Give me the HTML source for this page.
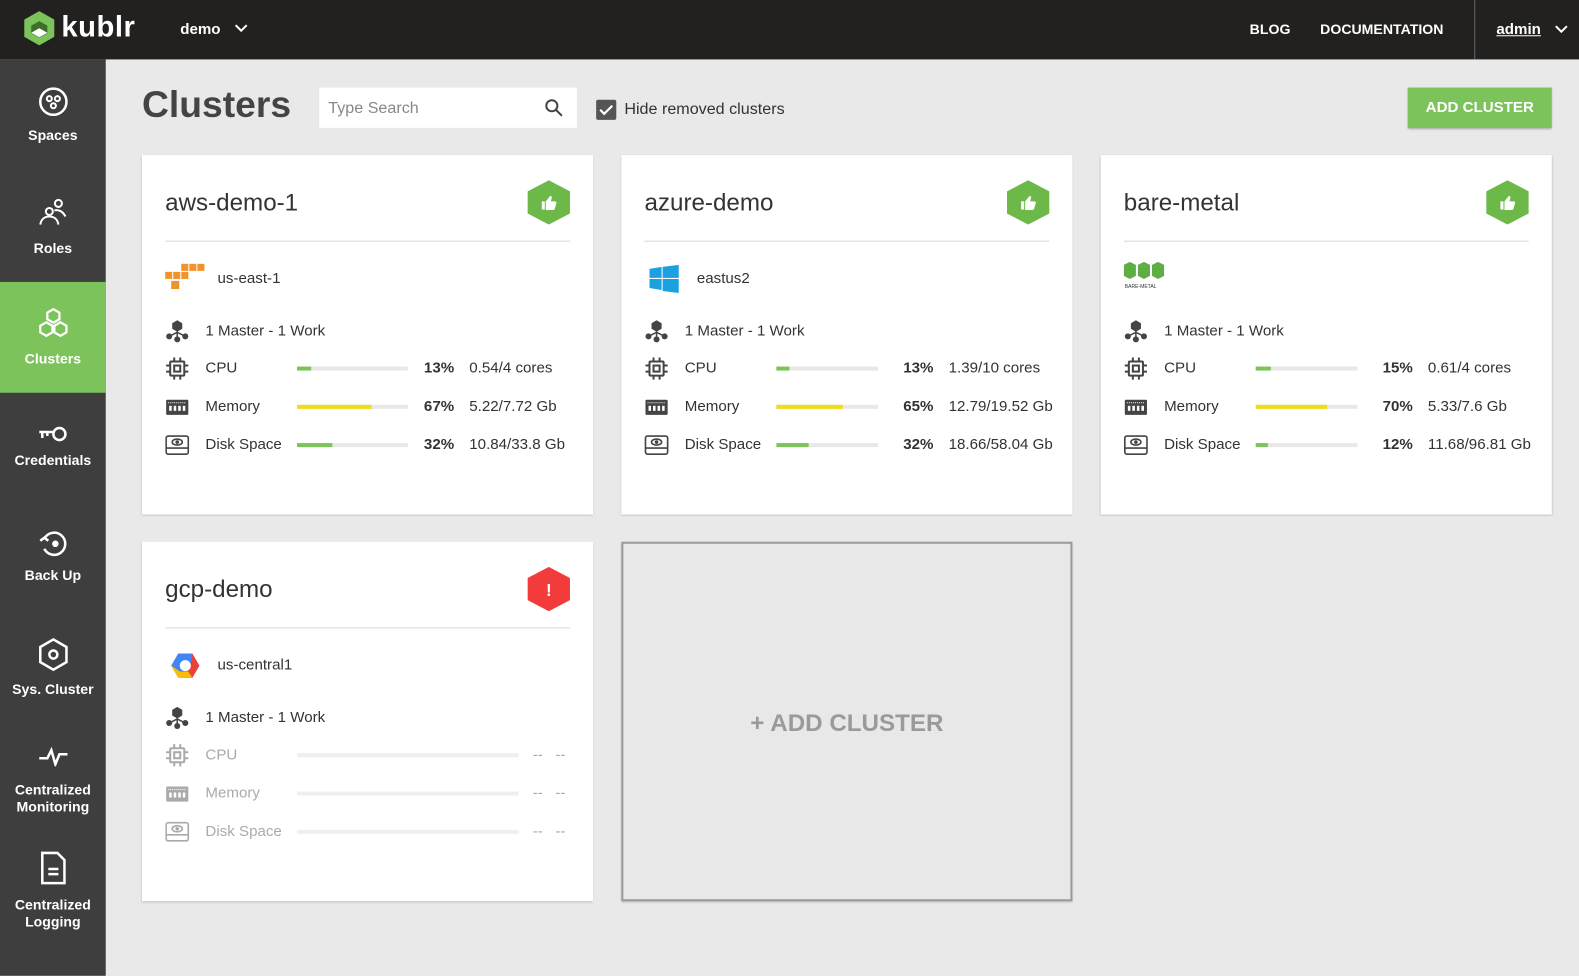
<!DOCTYPE html>
<html><head><meta charset="utf-8"><style>
*{box-sizing:border-box;margin:0;padding:0}
body{width:1579px;height:959px;overflow:hidden;background:#e9e9e9;font-family:"Liberation Sans",sans-serif;position:relative;color:#333}
#w{position:absolute;left:0;top:0;width:1568px;height:952px;transform:scale(1.007);transform-origin:0 0}
.top{position:absolute;left:0;top:0;width:1579px;height:59px;background:#222120;color:#fff}
.side{position:absolute;left:0;top:59px;width:105px;height:910px;background:#3e3e3e}
.nav{position:absolute;left:0;width:105px;text-align:center;color:#fff;font-weight:bold;font-size:14px;line-height:17px}
.nav svg{display:block;margin:0 auto}
.card{position:absolute;width:448px;height:357px;background:#fff;box-shadow:0 1px 2px rgba(0,0,0,.25)}
.card .t{position:absolute;left:23px;top:34px;font-size:24px;color:#333}
.card .hx{position:absolute;left:382px;top:25px}
.card .dv{position:absolute;left:23px;top:85px;width:402px;height:1px;background:#d8d8d8}
.r{position:absolute;left:23px;font-size:15px;color:#333;height:20px;line-height:20px;width:410px}
.r svg{position:absolute;left:0;top:-2px}
.r .l{position:absolute;left:40px}
.r .b{position:absolute;left:131px;top:8px;width:110px;height:4px;background:#e8e8e8}
.r .b i{display:block;height:4px}
.r .p{position:absolute;right:123px;font-weight:bold}
.r .v{position:absolute;left:302px}
.g .r{color:#aaa}
</style></head><body><div id="w">
<div class="top">
 <svg style="position:absolute;left:24px;top:11px" width="30" height="34" viewBox="0 0 30 34"><polygon points="15,0 30,8.5 30,25.5 15,34 0,25.5 0,8.5" fill="#7dc35b"/><polygon points="15,10 23,14.5 23,22 15,26.5 7,22 7,14.5" fill="#3d6e2a"/><polygon points="15,17 23,21.5 15,26 7,21.5" fill="#fff"/></svg>
 <div style="position:absolute;left:61px;top:11px;font-size:29px;font-weight:bold;letter-spacing:0.5px">kublr</div>
 <div style="position:absolute;left:179px;top:21px;font-size:15px;font-weight:bold">demo</div>
 <svg style="position:absolute;left:233px;top:24px" width="13" height="9"><path d="M1 1l5.5 5.5L12 1" stroke="#fff" stroke-width="2" fill="none"/></svg>
 <div style="position:absolute;left:1241px;top:21px;font-size:14px;font-weight:bold">BLOG</div>
 <div style="position:absolute;left:1311px;top:21px;font-size:14px;font-weight:bold">DOCUMENTATION</div>
 <div style="position:absolute;left:1464px;top:0;width:1px;height:59px;background:#666"></div>
 <div style="position:absolute;left:1486px;top:21px;font-size:15px;font-weight:bold;text-decoration:underline">admin</div>
 <svg style="position:absolute;left:1544px;top:25px" width="13" height="9"><path d="M1 1l5.5 5.5L12 1" stroke="#fff" stroke-width="2" fill="none"/></svg>
</div>
<div class="side">
 <div class="nav" style="top:26px"><svg width="32" height="32" viewBox="0 0 32 32"><circle cx="16" cy="16" r="13" stroke="#fff" stroke-width="2.5" fill="none"/><circle cx="12" cy="13" r="2.5" stroke="#fff" stroke-width="2" fill="none"/><circle cx="20" cy="13" r="2.5" stroke="#fff" stroke-width="2" fill="none"/><circle cx="16" cy="20" r="2.5" stroke="#fff" stroke-width="2" fill="none"/></svg><div style="margin-top:9px">Spaces</div></div>
 <div class="nav" style="top:136px"><svg width="32" height="32" viewBox="0 0 32 32"><circle cx="12" cy="15" r="3.5" stroke="#fff" stroke-width="2" fill="none"/><circle cx="21" cy="7" r="3.5" stroke="#fff" stroke-width="2" fill="none"/><path d="M3 28c1-6 5-8 9-8s8 2 9 8M17 14c3-1 8 0 11 6" stroke="#fff" stroke-width="2" fill="none"/></svg><div style="margin-top:11px">Roles</div></div>
 <div style="position:absolute;left:0;top:221px;width:105px;height:110px;background:#7dc35b"></div>
 <div class="nav" style="top:246px"><svg width="32" height="32" viewBox="0 0 32 32" fill="none" stroke="#fff" stroke-width="2.2"><polygon points="16,2 22,5.5 22,12 16,15.5 10,12 10,5.5"/><polygon points="9,15 15,18.5 15,25 9,28.5 3,25 3,18.5"/><polygon points="23,15 29,18.5 29,25 23,28.5 17,25 17,18.5"/></svg><div style="margin-top:11px">Clusters</div></div>
 <div class="nav" style="top:362px"><svg width="32" height="22" viewBox="0 0 32 22" fill="none" stroke="#fff" stroke-width="2.5"><circle cx="22" cy="10" r="6"/><path d="M2 8h14M5 8v6M10 8v4"/></svg><div style="margin-top:6px">Credentials</div></div>
 <div class="nav" style="top:466px"><svg width="32" height="30" viewBox="0 0 32 30" fill="none" stroke="#fff" stroke-width="2.5"><path d="M7 10a11 11 0 1 1 0 10"/><path d="M3 12l4 -3 4 3" /><circle cx="18" cy="15" r="2" fill="#fff"/></svg><div style="margin-top:8px">Back Up</div></div>
 <div class="nav" style="top:574px"><svg width="32" height="34" viewBox="0 0 32 34" fill="none" stroke="#fff" stroke-width="2.5"><polygon points="16,2 29,9.5 29,24.5 16,32 3,24.5 3,9.5"/><circle cx="16" cy="17" r="4"/></svg><div style="margin-top:9px">Sys. Cluster</div></div>
 <div class="nav" style="top:682px"><svg width="32" height="20" viewBox="0 0 32 20" fill="none" stroke="#fff" stroke-width="2.5"><path d="M2 12h8l4-8 4 14 4-10h8"/></svg><div style="margin-top:15px">Centralized<br>Monitoring</div></div>
 <div class="nav" style="top:786px"><svg width="32" height="34" viewBox="0 0 32 34" fill="none" stroke="#fff" stroke-width="2.5"><path d="M5 2h15l7 7v23H5z"/><path d="M11 18h10M11 23h10"/></svg><div style="margin-top:11px">Centralized<br>Logging</div></div>
</div>

<div style="position:absolute;left:141px;top:83px;font-size:37px;font-weight:bold;color:#444">Clusters</div>
<div style="position:absolute;left:317px;top:87px;width:256px;height:40px;background:#fff"><span style="position:absolute;left:9px;top:12px;font-size:16px;color:#888">Type Search</span>
<svg style="position:absolute;left:223px;top:10px" width="20" height="20" viewBox="0 0 20 20" fill="none" stroke="#444" stroke-width="2"><circle cx="8" cy="8" r="5.5"/><path d="M12 12l6 6"/></svg></div>
<div style="position:absolute;left:592px;top:99px;width:20px;height:20px;background:#555;border-radius:2px"><svg width="20" height="20"><path d="M4 10l4 4 8-8" stroke="#fff" stroke-width="2.2" fill="none"/></svg></div>
<div style="position:absolute;left:620px;top:100px;font-size:16px;color:#333">Hide removed clusters</div>
<div style="position:absolute;left:1398px;top:87px;width:143px;height:40px;background:#7dc35b;color:#fff;font-weight:bold;font-size:15px;text-align:center;line-height:40px;box-shadow:0 1px 2px rgba(0,0,0,.3)">ADD CLUSTER</div>

<svg width="0" height="0" style="position:absolute"><defs>
<g id="nodes"><polygon points="12,1 17,4 17,9.5 12,12.5 7,9.5 7,4" fill="#444"/><circle cx="4" cy="17" r="3" fill="#444"/><circle cx="12" cy="20" r="3" fill="#444"/><circle cx="20" cy="17" r="3" fill="#444"/><path d="M12 10v10M4 17l8-4 8 4" stroke="#444" stroke-width="1.5" fill="none"/></g>
<g id="cpu" fill="none" stroke-width="2"><rect x="5" y="5" width="14" height="14" rx="1"/><rect x="9" y="9" width="6" height="6"/><path d="M9 1v4M15 1v4M9 19v4M15 19v4M1 9h4M1 15h4M19 9h4M19 15h4"/></g>
<g id="mem"><rect x="1" y="5" width="22" height="15" rx="1"/><path d="M3 8h18" stroke="#fff" stroke-width="1" stroke-dasharray="1 1"/><g fill="#fff"><rect x="4" y="11" width="2.5" height="5"/><rect x="8.5" y="11" width="2.5" height="5"/><rect x="13" y="11" width="2.5" height="5"/><rect x="17.5" y="11" width="2.5" height="5"/></g></g>
<g id="disk" fill="none" stroke-width="1.6"><rect x="1" y="3" width="22" height="18" rx="2"/><path d="M1 15h22"/><ellipse cx="12" cy="9" rx="5" ry="3"/><circle cx="12" cy="9" r="1" fill="currentColor"/></g>
<g id="hexok"><polygon points="22,0 43,11 43,33 22,44 1,33 1,11" fill="#6cb94a"/><path d="M15 21h3v8h-3zM19 21l4-5c1-1 2 0 2 1l-1 4h4c1 0 2 1 1.5 2l-1.5 5c0 1-1 1.5-2 1.5h-7z" fill="#fff"/></g>
</defs></svg>

<div class="card" style="left:141px;top:154px">
<div class="t">aws-demo-1</div><svg class="hx" width="44" height="44"><use href="#hexok"/></svg><div class="dv"></div>
<div class="r" style="top:113px"><svg width="42" height="30" viewBox="0 0 42 30" style="top:-6px"><g fill="#f1932a"><rect x="16" y="1" width="7" height="7"/><rect x="24" y="1" width="7" height="7"/><rect x="32" y="1" width="7" height="7"/><rect x="0" y="9" width="7" height="7"/><rect x="8" y="9" width="7" height="7"/><rect x="16" y="9" width="7" height="7"/><rect x="6" y="18" width="8" height="8"/></g></svg><span class="l" style="left:52px">us-east-1</span></div>
<div class="r" style="top:165px"><svg width="24" height="24"><use href="#nodes"/></svg><span class="l">1 Master - 1 Work</span></div>
<div class="r" style="top:202px"><svg width="24" height="24" stroke="#444"><use href="#cpu"/></svg><span class="l">CPU</span><div class="b"><i style="width:13%;background:#7dc35b"></i></div><span class="p">13%</span><span class="v">0.54/4 cores</span></div>
<div class="r" style="top:240px"><svg width="24" height="24" fill="#444"><use href="#mem"/></svg><span class="l">Memory</span><div class="b"><i style="width:67%;background:#f0dc1a"></i></div><span class="p">67%</span><span class="v">5.22/7.72 Gb</span></div>
<div class="r" style="top:278px"><svg width="24" height="24" stroke="#444" color="#444"><use href="#disk"/></svg><span class="l">Disk Space</span><div class="b"><i style="width:32%;background:#7dc35b"></i></div><span class="p">32%</span><span class="v">10.84/33.8 Gb</span></div>
</div>
<div class="card" style="left:617px;top:154px">
<div class="t">azure-demo</div><svg class="hx" width="44" height="44"><use href="#hexok"/></svg><div class="dv"></div>
<div class="r" style="top:113px"><svg width="30" height="28" viewBox="0 0 30 28" style="top:-4px;left:5px"><path fill="#1ba1e2" d="M0 4l12-2v11H0zM13 2l16-2v13H13zM0 14h12v11L0 23zM13 14h16v14l-16-2z"/></svg><span class="l" style="left:52px">eastus2</span></div>
<div class="r" style="top:165px"><svg width="24" height="24"><use href="#nodes"/></svg><span class="l">1 Master - 1 Work</span></div>
<div class="r" style="top:202px"><svg width="24" height="24" stroke="#444"><use href="#cpu"/></svg><span class="l">CPU</span><div class="b" style="width:101px"><i style="width:13%;background:#7dc35b"></i></div><span class="p">13%</span><span class="v">1.39/10 cores</span></div>
<div class="r" style="top:240px"><svg width="24" height="24" fill="#444"><use href="#mem"/></svg><span class="l">Memory</span><div class="b" style="width:101px"><i style="width:65%;background:#f0dc1a"></i></div><span class="p">65%</span><span class="v">12.79/19.52 Gb</span></div>
<div class="r" style="top:278px"><svg width="24" height="24" stroke="#444" color="#444"><use href="#disk"/></svg><span class="l">Disk Space</span><div class="b" style="width:101px"><i style="width:32%;background:#7dc35b"></i></div><span class="p">32%</span><span class="v">18.66/58.04 Gb</span></div>
</div>
<div class="card" style="left:1093px;top:154px">
<div class="t">bare-metal</div><svg class="hx" width="44" height="44"><use href="#hexok"/></svg><div class="dv"></div>
<div class="r" style="top:105px;height:32px"><svg width="42" height="32" viewBox="0 0 42 32" style="top:0"><g fill="#5fae45"><polygon points="6,1 12,4 12,15 6,18 0,15 0,4"/><polygon points="20,1 26,4 26,15 20,18 14,15 14,4"/><polygon points="34,1 40,4 40,15 34,18 28,15 28,4"/></g><text x="1" y="27" font-size="5" fill="#333" font-family="Liberation Sans">BARE-METAL</text></svg></div>
<div class="r" style="top:165px"><svg width="24" height="24"><use href="#nodes"/></svg><span class="l">1 Master - 1 Work</span></div>
<div class="r" style="top:202px"><svg width="24" height="24" stroke="#444"><use href="#cpu"/></svg><span class="l">CPU</span><div class="b" style="width:101px"><i style="width:15%;background:#7dc35b"></i></div><span class="p">15%</span><span class="v">0.61/4 cores</span></div>
<div class="r" style="top:240px"><svg width="24" height="24" fill="#444"><use href="#mem"/></svg><span class="l">Memory</span><div class="b" style="width:101px"><i style="width:70%;background:#f0dc1a"></i></div><span class="p">70%</span><span class="v">5.33/7.6 Gb</span></div>
<div class="r" style="top:278px"><svg width="24" height="24" stroke="#444" color="#444"><use href="#disk"/></svg><span class="l">Disk Space</span><div class="b" style="width:101px"><i style="width:12%;background:#7dc35b"></i></div><span class="p">12%</span><span class="v">11.68/96.81 Gb</span></div>
</div>
<div class="card g" style="left:141px;top:538px">
<div class="t">gcp-demo</div><svg class="hx" width="44" height="44"><polygon points="22,0 43,11 43,33 22,44 1,33 1,11" fill="#f23b3b"/><text x="22" y="29" text-anchor="middle" fill="#fff" font-size="17" font-weight="bold" font-family="Liberation Sans">!</text></svg><div class="dv"></div>
<div class="r" style="top:113px;color:#333"><svg width="30" height="28" viewBox="0 0 30 28" style="top:-4px;left:5px"><polygon points="8,2 22,2 29,14 22,26 8,26 1,14" fill="#4285f4"/><polygon points="22,2 29,14 22,26 15,26 20,14" fill="#ea4335"/><polygon points="1,14 8,26 22,26 18,20 10,20" fill="#fbbc05"/><circle cx="15" cy="14" r="5.5" fill="#fff"/></svg><span class="l" style="left:52px">us-central1</span></div>
<div class="r" style="top:165px;color:#333"><svg width="24" height="24"><use href="#nodes"/></svg><span class="l">1 Master - 1 Work</span></div>
<div class="r" style="top:202px"><svg width="24" height="24" stroke="#aaa"><use href="#cpu"/></svg><span class="l">CPU</span><div class="b" style="width:220px;background:#efefef"></div><span class="v" style="left:365px">--&nbsp;&nbsp;&nbsp;--</span></div>
<div class="r" style="top:240px"><svg width="24" height="24" fill="#aaa"><use href="#mem"/></svg><span class="l">Memory</span><div class="b" style="width:220px;background:#efefef"></div><span class="v" style="left:365px">--&nbsp;&nbsp;&nbsp;--</span></div>
<div class="r" style="top:278px"><svg width="24" height="24" stroke="#aaa" color="#aaa"><use href="#disk"/></svg><span class="l">Disk Space</span><div class="b" style="width:220px;background:#efefef"></div><span class="v" style="left:365px">--&nbsp;&nbsp;&nbsp;--</span></div>
</div>
<div style="position:absolute;left:617px;top:538px;width:448px;height:357px;border:2px solid #9a9a9a;background:#e8e8e8;box-shadow:0 1px 2px rgba(0,0,0,.25)">
<div style="position:absolute;left:0;right:0;top:165px;text-align:center;font-size:24px;font-weight:bold;color:#9a9a9a">+ ADD CLUSTER</div></div>
</div></body></html>
